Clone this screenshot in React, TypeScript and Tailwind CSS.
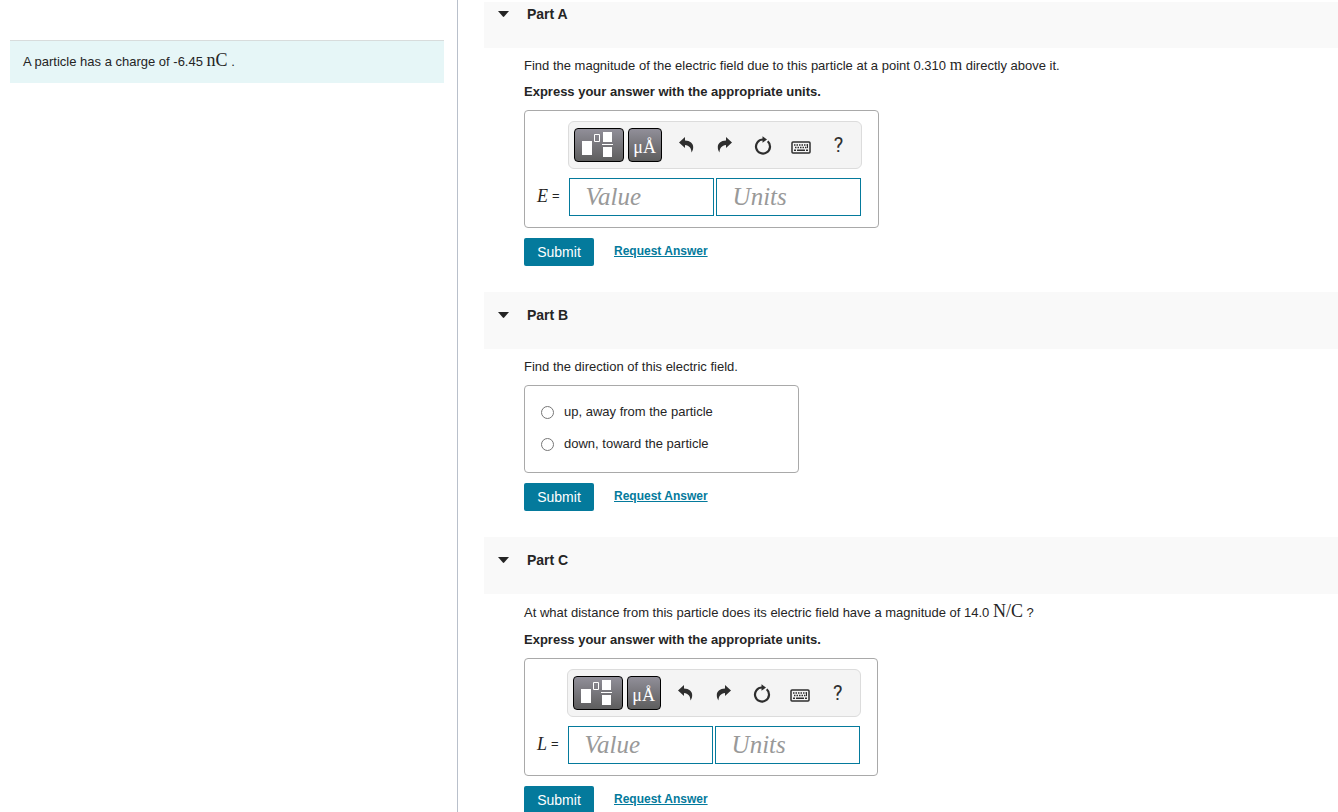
import { ReactNode, useState } from "react";
import clsx from "clsx";

export default function App() {
  return (
    <div className="grid h-screen grid-cols-[458fr_880fr] overflow-hidden bg-white font-['Liberation_Sans',Arial,sans-serif] text-[13px] leading-5 text-[#252525]">
      <aside className="border-r border-[#b9c0cb] pt-10 pr-[13px] pl-2.5">
        <div className="border-t border-[#d8dcdc] bg-[#e6f6f7] px-[13px] pt-2.5 pb-[11px]">
          <p>
            A particle has a charge of -6.45 <Unit>nC</Unit> .
          </p>
        </div>
      </aside>

      <main className="min-w-0 pt-0.5 pl-[26px]">
        <Part title="Part A" first>
          <p>
            Find the magnitude of the electric field due to this particle at a
            point 0.310 <Unit small>m</Unit> directly above it.
          </p>
          <p className="mt-1.5 font-bold">
            Express your answer with the appropriate units.
          </p>
          <AnswerBox id="field" symbol="E" />
        </Part>

        <Part title="Part B">
          <p>Find the direction of this electric field.</p>
          <DirectionChoices />
        </Part>

        <Part title="Part C">
          <p className="leading-[22px]">
            At what distance from this particle does its electric field have a
            magnitude of 14.0 <Unit>N/C</Unit> ?
          </p>
          <p className="mt-1.5 font-bold">
            Express your answer with the appropriate units.
          </p>
          <AnswerBox id="distance" symbol="L" />
        </Part>
      </main>
    </div>
  );
}

type PartProps = {
  title: string;
  first?: boolean;
  children: ReactNode;
};

function Part({ title, first, children }: PartProps) {
  const [open, setOpen] = useState(true);

  return (
    <section>
      <h2
        className={clsx("bg-[#f9f9f9] pb-6 pl-3.5", first ? "pt-0.5" : "pt-[13px]")}
      >
        <button
          type="button"
          aria-expanded={open}
          onClick={() => setOpen(!open)}
          className="flex items-center gap-[18px] text-sm leading-5 font-bold"
        >
          <svg
            viewBox="0 0 11 6"
            className={clsx("h-1.5 w-[11px]", !open && "-rotate-90")}
            fill="currentColor"
          >
            <path d="M0 0h11L6.2 5.6a1 1 0 0 1-1.4 0z" />
          </svg>
          {title}
        </button>
      </h2>
      {open && (
        <div className="pt-2 pb-[26px] pl-10">
          {children}
          <div className="mt-2.5 flex items-start gap-5">
            <button
              type="button"
              className="h-7 w-[70px] rounded-[2px] bg-[#047a9c] text-sm text-white"
            >
              Submit
            </button>
            <a
              href="#"
              className="pt-[3px] text-xs leading-5 font-bold text-[#047a9c] underline"
            >
              Request Answer
            </a>
          </div>
        </div>
      )}
    </section>
  );
}

function Unit({ small, children }: { small?: boolean; children: ReactNode }) {
  return (
    <span
      className={clsx(
        "font-['Liberation_Serif',serif]",
        small ? "text-base leading-none" : "text-lg leading-none",
      )}
    >
      {children}
    </span>
  );
}

function DirectionChoices() {
  const choices = ["up, away from the particle", "down, toward the particle"];

  return (
    <div className="mt-2 flex w-[275px] flex-col gap-3 rounded border border-[#a9a9a9] px-4 pt-4 pb-[18px]">
      {choices.map((choice) => (
        <label key={choice} className="flex items-center gap-2.5">
          <input type="radio" name="direction" className="h-[13px] w-[13px]" />
          {choice}
        </label>
      ))}
    </div>
  );
}

function AnswerBox({ id, symbol }: { id: string; symbol: string }) {
  return (
    <div className="mt-2 flex w-fit items-end rounded border border-[#a9a9a9] pt-2.5 pr-4 pb-[11px] pl-3">
      <label htmlFor={id} className="mr-2 flex h-10 items-center gap-1">
        <i className="font-['Liberation_Serif',serif] text-lg leading-5">
          {symbol}
        </i>
        <span>=</span>
      </label>
      <div>
        <Toolbar />
        <div className="mt-[9px] flex gap-0.5 px-px">
          <input
            id={id}
            placeholder="Value"
            className="h-[38px] w-[145px] border border-[#047a9c] px-4 font-['Liberation_Serif',serif] text-[25px] placeholder:text-[#999] placeholder:italic"
          />
          <input
            aria-label="Units"
            placeholder="Units"
            className="h-[38px] w-[145px] border border-[#047a9c] px-4 font-['Liberation_Serif',serif] text-[25px] placeholder:text-[#999] placeholder:italic"
          />
        </div>
      </div>
    </div>
  );
}

function Toolbar() {
  return (
    <div className="flex h-12 items-center rounded-md border border-[#dcdcdc] bg-[#f4f4f4] pr-[3px] pl-[5px] text-[#2e2e2e]">
      <button
        type="button"
        aria-label="Templates"
        className="flex h-[34px] w-[50px] items-center justify-center rounded border border-black bg-linear-to-b from-[#918f99] to-[#5e5e5e]"
      >
        <svg viewBox="0 0 48 32" className="h-8 w-12">
          <path
            d="M7 12h10v14H7zM28 3h9v10h-9zM28 18h9v10h-9zM27 15h11v1H27z"
            fill="#fff"
          />
          <path d="M19.5 5.5h5v7h-5z" fill="none" stroke="#fff" />
        </svg>
      </button>
      <button
        type="button"
        aria-label="Symbols"
        className="mr-1.5 ml-1 h-[34px] w-[34px] rounded border border-black bg-linear-to-b from-[#918f99] to-[#5e5e5e] pt-1 font-['Liberation_Serif',serif] text-lg text-white"
      >
        μÅ
      </button>
      <ToolButton label="Undo">
        <svg viewBox="0 0 15 16" className="h-4 w-[15px]" fill="currentColor">
          <path d="M0 5.5 6 0v3.4c5.2.2 8.2 2.8 8.2 6.6 0 2.4-.6 4-1.7 5.4C12.4 11.2 10.2 8.2 6 7.9V11z" />
        </svg>
      </ToolButton>
      <ToolButton label="Redo">
        <svg viewBox="0 0 15 16" className="h-4 w-[15px]" fill="currentColor">
          <path d="M15 5.5 9 0v3.4C3.8 3.6.8 6.2.8 10c0 2.4.6 4 1.7 5.4C2.6 11.2 4.8 8.2 9 7.9V11z" />
        </svg>
      </ToolButton>
      <ToolButton label="Reset">
        <svg viewBox="0 0 18 19" className="h-[19px] w-[18px]">
          <path
            d="M13.7 5.3a7 7 0 1 1-4.7-1.8"
            fill="none"
            stroke="currentColor"
            strokeWidth="2.2"
          />
          <path d="M8.5.3 13 3.5 8.5 6.8z" fill="currentColor" />
        </svg>
      </ToolButton>
      <ToolButton label="Keyboard">
        <svg viewBox="0 0 20 13" className="mt-1 h-[13px] w-5">
          <rect
            x="1"
            y="1"
            width="18"
            height="11"
            rx="1"
            fill="none"
            stroke="currentColor"
            strokeWidth="1.5"
          />
          <path
            d="M3 4h14M4 6.5h13"
            fill="none"
            stroke="currentColor"
            strokeWidth="1.5"
            strokeDasharray="1.5 1"
          />
          <path
            d="M3 8.5h2V10H3zM6 8.5h8V10H6zM15 8.5h2V10h-2zM16 3.3h1V7h-1z"
            fill="currentColor"
          />
        </svg>
      </ToolButton>
      <ToolButton label="Help">
        <span className="font-[Roboto,sans-serif] text-xl leading-5">?</span>
      </ToolButton>
    </div>
  );
}

function ToolButton({ label, children }: { label: string; children: ReactNode }) {
  return (
    <button
      type="button"
      aria-label={label}
      className="flex h-[34px] w-[38px] items-center justify-center"
    >
      {children}
    </button>
  );
}
